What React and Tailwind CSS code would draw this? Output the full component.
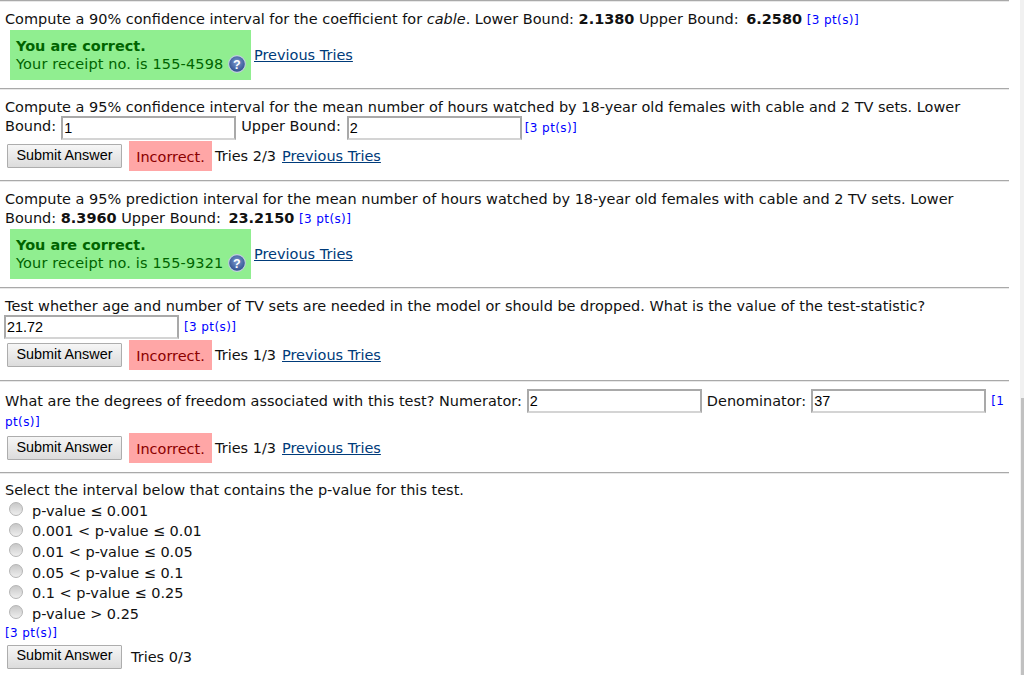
const Hr = () => <div className="h-[2px] bg-[#a9a9a9] border-b border-[#e8e8e8]" />

const Pts = ({ children = '[3 pt(s)]', className = '' }) => (
  <span className={`${className} text-[12px] text-[#0000ff] tracking-[0.4px]`}>{children}</span>
)

const Tries = ({ className = 'ml-[7px]' }) => (
  <a href="#" className={`${className} text-[#003b7a] underline`}>Previous Tries</a>
)

const Field = ({ value, w = 'w-[175px]', className = '' }) => (
  <input
    readOnly
    value={value}
    className={`${w} ${className} h-[24px] shrink-0 border-2 border-t-[#a9a9a9] border-l-[#a9a9a9] border-r-[#a9a9a9] border-b-[#d4d4d4] bg-white px-[1px] text-[14.4px] text-black font-['Liberation_Sans',sans-serif] outline-none`}
  />
)

const Submit = () => (
  <button className="h-[24px] w-[115px] rounded-[1px] border border-[#adadad] bg-gradient-to-b from-[#f6f6f6] to-[#dcdcdc] pb-[2px] text-[14.4px] text-black font-['Liberation_Sans',sans-serif]">
    Submit Answer
  </button>
)

const Correct = ({ receipt }) => (
  <div className="flex items-start">
    <div className="ml-[10px] h-[50px] w-[241px] bg-[#90ee90] pl-[6px] pt-[7px] leading-[18px] text-[#006400]">
      <div className="font-bold">You are correct.</div>
      <div className="flex items-center tracking-[0.15px]">
        Your receipt no. is {receipt}
        <svg viewBox="0 0 20 20" className="ml-[5px] h-[18px] w-[18px] shrink-0">
          <defs>
            <radialGradient id={`h${receipt}`} cx="50%" cy="40%" r="60%">
              <stop offset="0%" stopColor="#7d9bd0" />
              <stop offset="100%" stopColor="#2c4c8c" />
            </radialGradient>
          </defs>
          <circle cx="10" cy="10" r="9.3" fill={`url(#h${receipt})`} stroke="#c5d0e0" strokeWidth="1.2" />
          <text x="10" y="15" textAnchor="middle" fontSize="14" fontWeight="700" fill="#fff" fontFamily="Liberation Sans, sans-serif">?</text>
        </svg>
      </div>
    </div>
    <Tries className="ml-[3px] mt-[16px] leading-[18px]" />
  </div>
)

const Result = ({ tries }) => (
  <div className="flex items-center pl-[7px]">
    <Submit />
    <span className="ml-[7px] flex h-[30px] w-[83px] items-center justify-center bg-[#ffa6a6] pt-[2px] text-[#8b0000]">Incorrect.</span>
    <span className="ml-[3px] pt-[1px]">Tries {tries}</span>
    <Tries className="ml-[6px] pt-[1px]" />
  </div>
)

export default function App() {
  return (
    <div className="relative h-[675px] overflow-hidden bg-white font-['DejaVu_Sans',Verdana,sans-serif] text-[14.48px] leading-[19px] text-[#111]">
      <div className="w-[1009px]">
        <Hr />
        <div className="h-[86px] pt-[8px]">
          <div className="h-[20px] whitespace-nowrap pl-[5px]">
            Compute a 90% confidence interval for the coefficient for <i>cable</i>. Lower Bound: <b>2.1380</b> Upper Bound: <b className="ml-[3px]">6.2580</b> <Pts />
          </div>
          <Correct receipt="155-4598" />
        </div>
        <Hr />
        <div className="h-[90px] pt-[8px]">
          <div className="whitespace-nowrap pl-[5px]">Compute a 95% confidence interval for the mean number of hours watched by 18-year old females with cable and 2 TV sets. Lower</div>
          <div className="flex h-[19px] items-center gap-[5px] pl-[5px]">
            Bound: <Field value="1" className="mt-[3px]" /> Upper Bound: <Field value="2" className="ml-[1px] mt-[3px]" /> <Pts className="-ml-[2px] mt-[3px]" />
          </div>
          <div className="mt-[5px]"><Result tries="2/3" /></div>
        </div>
        <Hr />
        <div className="h-[105px] pt-[8px]">
          <div className="whitespace-nowrap pl-[5px]">Compute a 95% prediction interval for the mean number of hours watched by 18-year old females with cable and 2 TV sets. Lower</div>
          <div className="h-[20px] pl-[5px]">Bound: <b>8.3960</b> Upper Bound: <b className="ml-[3px]">23.2150</b> <Pts /></div>
          <Correct receipt="155-9321" />
        </div>
        <Hr />
        <div className="h-[91px] pt-[8px]">
          <div className="whitespace-nowrap pl-[5px]">Test whether age and number of TV sets are needed in the model or should be dropped. What is the value of the test-statistic?</div>
          <div className="-mt-px flex items-center gap-[5px] pl-[4px]"><Field value="21.72" /> <Pts /></div>
          <div className="mt-[1px]"><Result tries="1/3" /></div>
        </div>
        <Hr />
        <div className="h-[90px] pt-[7px]">
          <div className="flex items-center gap-[5px] whitespace-nowrap pl-[5px]">
            What are the degrees of freedom associated with this test? Numerator: <Field value="2" /> Denominator: <Field value="37" /> <Pts>[1</Pts>
          </div>
          <div className="-mt-px pl-[5px]"><Pts>pt(s)]</Pts></div>
          <div className="mt-[1px]"><Result tries="1/3" /></div>
        </div>
        <Hr />
        <div className="pt-[7px]">
          <div className="pl-[5px]">Select the interval below that contains the p-value for this test.</div>
          <div className="mt-[1px]">
            {['p-value ≤ 0.001', '0.001 < p-value ≤ 0.01', '0.01 < p-value ≤ 0.05', '0.05 < p-value ≤ 0.1', '0.1 < p-value ≤ 0.25', 'p-value > 0.25'].map((t) => (
              <div key={t} className="flex h-[20.6px] items-center pl-[9px]">
                <span className="mb-[4px] h-[14px] w-[14px] rounded-full border border-[#b5b5b5] bg-gradient-to-b from-[#c8c8c8] to-[#eeeeee]" />
                <span className="ml-[9px]">{t}</span>
              </div>
            ))}
          </div>
          <div className="-mt-[2px] pl-[5px]"><Pts /></div>
          <div className="mt-[2px] flex items-center pl-[7px]">
            <Submit />
            <span className="ml-[9px] pt-[1px]">Tries 0/3</span>
          </div>
        </div>
      </div>
      <div className="absolute right-0 top-0 h-full w-[4px] bg-[#f1f1f1]">
        <div className="absolute bottom-0 right-0 h-[277px] w-[3px] bg-[#c1c1c1]" />
      </div>
    </div>
  )
}
